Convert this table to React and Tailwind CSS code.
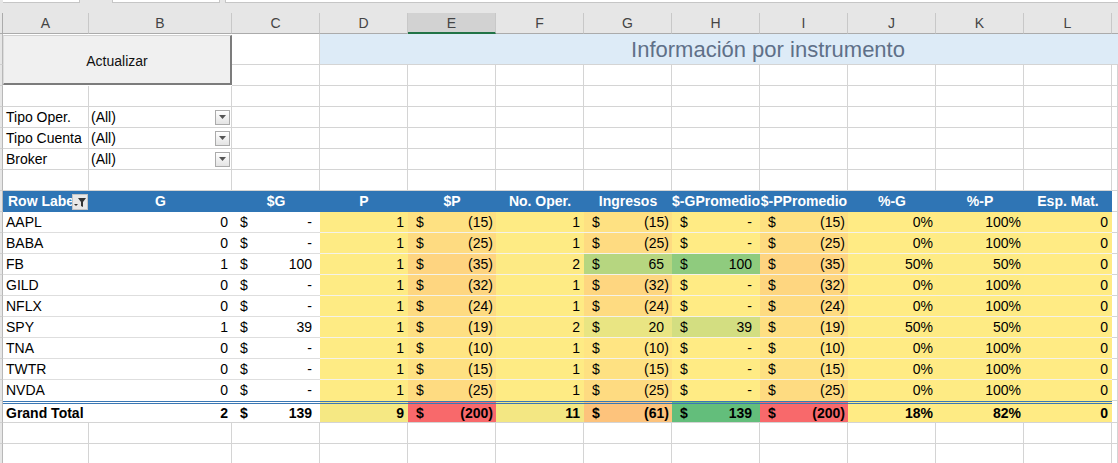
import React from 'react';

const LINE = 'border-r border-b border-[#d4d4d4]';
const GUT = 'bg-[#e6e6e6] border-r border-b border-r-[#b8b8b8] border-b-[#d0d0d0]';
const LETTERS = ['A', 'B', 'C', 'D', 'E', 'F', 'G', 'H', 'I', 'J', 'K', 'L'];
const HEADS = ['G', '$G', 'P', '$P', 'No. Oper.', 'Ingresos', '$-GPromedio', '$-PPromedio', '%-G', '%-P', 'Esp. Mat.'];

// name, G, $G, P, $P, No. Oper., Ingresos, $-GProm, $-PProm, %-G, %-P, Esp. Mat.
const rows = [
  ['AAPL', 0, 0, 1, -15, 1, -15, 0, -15, 0, 1, 0],
  ['BABA', 0, 0, 1, -25, 1, -25, 0, -25, 0, 1, 0],
  ['FB', 1, 100, 1, -35, 2, 65, 100, -35, 0.5, 0.5, 0],
  ['GILD', 0, 0, 1, -32, 1, -32, 0, -32, 0, 1, 0],
  ['NFLX', 0, 0, 1, -24, 1, -24, 0, -24, 0, 1, 0],
  ['SPY', 1, 39, 1, -19, 2, 20, 39, -19, 0.5, 0.5, 0],
  ['TNA', 0, 0, 1, -10, 1, -10, 0, -10, 0, 1, 0],
  ['TWTR', 0, 0, 1, -15, 1, -15, 0, -15, 0, 1, 0],
  ['NVDA', 0, 0, 1, -25, 1, -25, 0, -25, 0, 1, 0],
];
const total = ['Grand Total', 2, 139, 9, -200, 11, -61, 139, -200, 0.18, 0.82, 0];

// colour scale over D:L, red = min, yellow = 0 (median), green = max
const RED = [248, 105, 107], YEL = [255, 235, 132], GRN = [99, 190, 123];
const heat = (v) => {
  const [a, b, t] = v < 0 ? [RED, YEL, (v + 200) / 200] : [YEL, GRN, v / 139];
  return `rgb(${a.map((c, i) => Math.round(c + (b[i] - c) * t)).join(',')})`;
};

const kinds = ['num', 'money', 'num', 'money', 'money', 'money', 'pct', 'pct', 'num'];

const Money = ({ v }) => (
  <div className="flex w-full justify-between pl-[8px]">
    <span>$</span>
    {v < 0 ? <span className="pr-[3px]">({Math.abs(v)})</span> : <span className="pr-[8px]">{v === 0 ? '-' : v}</span>}
  </div>
);

const Dropdown = () => (
  <div className="mr-[1px] flex h-[15px] w-[15px] items-center justify-center border border-[#ababab] bg-gradient-to-b from-white to-[#e4e4e4]">
    <svg width="7" height="4" viewBox="0 0 7 4"><path d="M0 0h7L3.5 4z" fill="#555" /></svg>
  </div>
);

function PivotRow({ r, isTotal, last }) {
  const wt = isTotal ? 'font-bold' : '';
  const top = isTotal ? 'border-t-[3px] border-double border-t-[#3a77b4] border-b border-b-[#d4d4d4]' : last ? '' : 'border-b';
  return (
    <>
      <div className={GUT} />
      <div className={`flex items-center whitespace-nowrap px-[3px] ${wt} ${top} border-[#dedede]`}>{r[0]}</div>
      <div className={`flex items-center justify-end pr-[4px] ${wt} ${top} border-[#dedede]`}>{r[1]}</div>
      <div className={`flex items-center ${wt} ${top} border-[#dedede]`}><Money v={r[2]} /></div>
      {r.slice(3).map((v, i) => (
        <div
          key={i}
          className={`flex items-center justify-end ${wt} ${top} border-[#f4f2ea] ${kinds[i] === 'num' ? 'pr-[4px]' : kinds[i] === 'pct' ? 'pr-[3px]' : ''}`}
          style={{ backgroundColor: heat(v) }}
        >
          {kinds[i] === 'money' ? <Money v={v} /> : kinds[i] === 'pct' ? `${Math.round(v * 100)}%` : v}
        </div>
      ))}
      <div className={LINE} />
    </>
  );
}

const EmptyRow = () => (
  <>
    <div className={GUT} />
    {Array.from({ length: 13 }).map((_, i) => <div key={i} className={LINE} />)}
  </>
);

export default function App() {
  return (
    <div className="h-[463px] w-[1118px] overflow-hidden bg-white font-['Liberation_Sans',Arial,sans-serif] text-[14px] text-black">
      {/* ribbon remnants */}
      <div className="flex h-[13px] items-start bg-[#e6e6e6]">
        <div className="ml-[3px] h-[3px] w-[77px] border-b border-r border-[#c6c6c6] bg-white" />
        <div className="ml-[32px] h-[3px] w-[108px] border-x border-b border-[#c6c6c6] bg-white" />
        <div className="ml-[5px] h-[3px] flex-1 border-b border-l border-[#c6c6c6] bg-white" />
      </div>

      <div className="grid grid-cols-[3px_86px_143px_88px_repeat(9,88px)_1fr] grid-rows-[21px_31px_repeat(16,21px)_22px_21px_21px]">
        {/* column letters */}
        <div className="border-b border-r border-[#ababab] bg-[#e6e6e6]" />
        {LETTERS.map((l) => (
          <div
            key={l}
            className={`flex items-center justify-center border-r border-r-[#c8c8c8] text-[#444] ${
              l === 'E' ? 'border-b-2 border-b-[#217346] bg-[#d2d2d2] pt-[2px]' : 'border-b border-b-[#ababab] bg-[#e6e6e6]'
            }`}
          >
            {l}
          </div>
        ))}
        <div className="border-b border-[#ababab] bg-[#e6e6e6]" />

        {/* row 1 + 2 : button and title */}
        <div className={GUT} />
        <div className="col-span-2 row-span-2 pb-[1px] pt-[1px]">
          <div className="flex h-full items-center justify-center border-l border-t border-b-2 border-r-2 border-l-[#dcdcdc] border-t-[#d0d0d0] border-b-[#7c7c7c] border-r-[#7c7c7c] bg-[#f0f0f0] pt-[3px] text-[#111]">
            Actualizar
          </div>
        </div>
        <div className={LINE} />
        <div className="col-span-10 flex items-center justify-center border-b border-[#d4d4d4] bg-[#ddebf7] pl-[98px] text-[22px] text-[#5f7088]">
          Información por instrumento
        </div>
        <div className={GUT} />
        {Array.from({ length: 11 }).map((_, i) => <div key={i} className={LINE} />)}

        <EmptyRow />

        {/* report filters */}
        {['Tipo Oper.', 'Tipo Cuenta', 'Broker'].map((f) => (
          <React.Fragment key={f}>
            <div className={GUT} />
            <div className={`${LINE} flex items-center whitespace-nowrap pl-[3px]`}>{f}</div>
            <div className={`${LINE} flex items-center justify-between pl-[2px]`}>
              <span>(All)</span>
              <Dropdown />
            </div>
            {Array.from({ length: 11 }).map((_, i) => <div key={i} className={LINE} />)}
          </React.Fragment>
        ))}

        <EmptyRow />

        {/* pivot header */}
        <div className={GUT} />
        <div className="flex items-center overflow-hidden bg-[#2f75b5] pl-[5px] font-bold text-white">
          <span className="min-w-0 flex-1 overflow-hidden whitespace-nowrap">Row Labels</span>
          <div className="mr-[1px] flex h-[16px] w-[16px] shrink-0 items-center justify-center border border-[#c4c4c4] bg-[#e8e8e8]">
            <svg width="14" height="14" viewBox="0 0 14 14">
              <path d="M1 9h4L3 11z" fill="#333" />
              <path d="M5 3h8l-3 4v5l-2-1V7z" fill="#333" />
            </svg>
          </div>
        </div>
        {HEADS.map((h) => (
          <div key={h} className="flex items-center justify-center overflow-hidden whitespace-nowrap bg-[#2f75b5] font-bold text-white">
            {h}
          </div>
        ))}
        <div className={LINE} />

        {rows.map((r, i) => <PivotRow key={r[0]} r={r} last={i === rows.length - 1} />)}
        <PivotRow r={total} isTotal />

        <EmptyRow />
        <EmptyRow />
      </div>
    </div>
  );
}
